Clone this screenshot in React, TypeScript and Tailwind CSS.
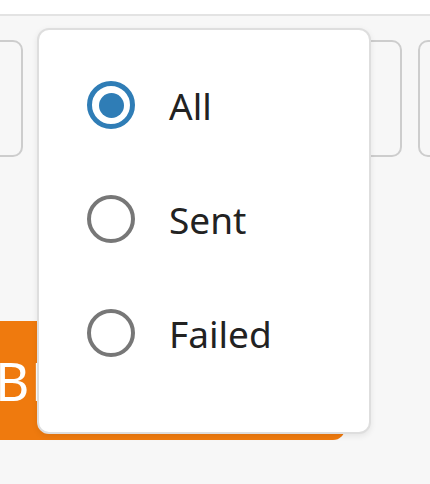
const OPTIONS = [
  { label: 'All', checked: true },
  { label: 'Sent', checked: false },
  { label: 'Failed', checked: false },
]

function Radio({ checked }: { checked: boolean }) {
  return checked ? (
    <span className="w-[48px] h-[48px] rounded-full border-[5px] border-[#2f7db6] flex items-center justify-center shrink-0">
      <span className="w-[25px] h-[25px] rounded-full bg-[#2f7db6]" />
    </span>
  ) : (
    <span className="w-[48px] h-[48px] rounded-full border-[4px] border-[#777777] shrink-0" />
  )
}

export default function App() {
  return (
    <div className="relative w-[430px] h-[484px] overflow-hidden bg-[#f7f7f7] font-['Noto_Sans',sans-serif]">
      {/* Top bar */}
      <div className="h-[16px] bg-white border-b-2 border-[#e3e3e3]" />

      {/* Filter chips */}
      <div className="flex gap-[16px] mt-[24px] ml-[-60px]">
        <div className="w-[83px] h-[117px] shrink-0 rounded-[10px] border-2 border-[#cdcdcd]" />
        <div className="w-[281px] h-[117px] shrink-0 rounded-[10px] border-2 border-[#cdcdcd]" />
        <div className="w-[66px] h-[117px] shrink-0 rounded-[10px] border-2 border-[#cdcdcd]" />
        <div className="w-[60px] h-[117px] shrink-0 rounded-[10px] border-2 border-[#cdcdcd]" />
      </div>

      {/* Action button */}
      <div className="mt-[164px] w-[345px] h-[119px] bg-[#ef7a0e] rounded-r-[12px] flex items-center overflow-hidden">
        <span className="ml-[-5px] text-[53px] leading-none text-white tracking-wide">BLOCK</span>
      </div>

      {/* Status dropdown */}
      <div className="absolute left-[37px] top-[28px] w-[334px] h-[406px] bg-white rounded-[12px] border-2 border-[#dedede] shadow-[0_2px_6px_rgba(0,0,0,0.08)] pt-[18px]">
        {OPTIONS.map((o) => (
          <div key={o.label} className="h-[114px] flex items-center pl-[48px] gap-[34px]">
            <Radio checked={o.checked} />
            <span className="text-[37px] leading-none text-[#222222]">{o.label}</span>
          </div>
        ))}
      </div>
    </div>
  )
}
